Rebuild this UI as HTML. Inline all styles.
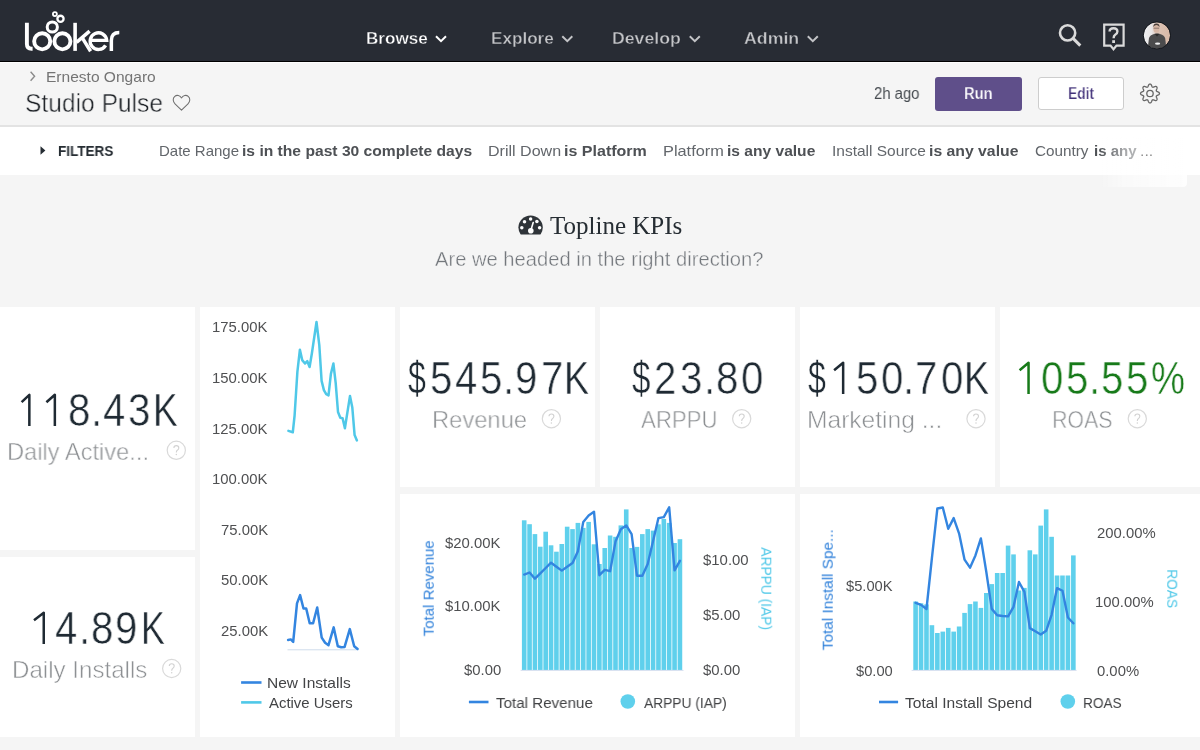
<!DOCTYPE html>
<html><head><meta charset="utf-8"><title>Studio Pulse</title>
<style>
html,body{margin:0;padding:0;}
body{width:1200px;height:750px;overflow:hidden;position:relative;background:#f5f5f5;font-family:"Liberation Sans",sans-serif;}
.b{position:absolute;}
.t{position:absolute;line-height:1;white-space:nowrap;transform-origin:0 0;will-change:transform;}
</style></head><body>
<div class="b" style="left:0;top:0;width:1200px;height:61px;background:#282c34"></div>
<div class="b" style="left:0;top:61px;width:1200px;height:1px;background:#000"></div>
<div class="b" style="left:0;top:62px;width:1200px;height:1px;background:#fdfdfd"></div>
<div class="b" style="left:0;top:63px;width:1200px;height:62px;background:#f5f5f5"></div>
<div class="b" style="left:0;top:125px;width:1200px;height:2px;background:#e3e3e3"></div>
<div class="b" style="left:0;top:127px;width:1200px;height:48px;background:#ffffff"></div>
<!-- buttons -->
<div class="b" style="left:935px;top:77px;width:87px;height:34px;background:#5f4f8a;border-radius:3px"></div>
<div class="b" style="left:1038px;top:77px;width:83.5px;height:31px;background:#fff;border:1.5px solid #cdcdcd;border-radius:3px"></div>
<!-- tiles -->
<div class="b" style="left:0;top:307px;width:194.5px;height:243px;background:#fff"></div>
<div class="b" style="left:0;top:557px;width:194.5px;height:180px;background:#fff"></div>
<div class="b" style="left:200px;top:307px;width:194.5px;height:430px;background:#fff"></div>
<div class="b" style="left:400px;top:307px;width:194.5px;height:180px;background:#fff"></div>
<div class="b" style="left:600px;top:307px;width:194.5px;height:180px;background:#fff"></div>
<div class="b" style="left:800px;top:307px;width:194.5px;height:180px;background:#fff"></div>
<div class="b" style="left:1000px;top:307px;width:200px;height:180px;background:#fff"></div>
<div class="b" style="left:400px;top:494px;width:394.5px;height:243px;background:#fff"></div>
<div class="b" style="left:800px;top:494px;width:400px;height:243px;background:#fff"></div>
<div class="t" style="left:365.69px;top:30.00px;font-size:17px;color:#ffffff;font-weight:bold;transform:scaleX(1.0058);-webkit-text-stroke:0.35px #282c34;">Browse</div>
<div class="t" style="left:490.69px;top:30.00px;font-size:17px;color:#c3c4c7;font-weight:bold;transform:scaleX(1.0066);-webkit-text-stroke:0.35px #282c34;">Explore</div>
<div class="t" style="left:612.46px;top:30.00px;font-size:17px;color:#c3c4c7;font-weight:bold;transform:scaleX(1.0394);-webkit-text-stroke:0.35px #282c34;">Develop</div>
<div class="t" style="left:744.20px;top:30.00px;font-size:17px;color:#c3c4c7;font-weight:bold;transform:scaleX(1.0438);-webkit-text-stroke:0.35px #282c34;">Admin</div>
<div class="t" style="left:45.66px;top:69.00px;font-size:15px;color:#747474;transform:scaleX(1.0359);">Ernesto Ongaro</div>
<div class="t" style="left:24.65px;top:90.00px;font-size:26px;color:#1a1e23;transform:scaleX(0.9455);-webkit-text-stroke:0.45px #f5f5f5;">Studio Pulse</div>
<div class="t" style="left:874.20px;top:86.00px;font-size:16px;color:#464b50;transform:scaleX(0.9278);">2h ago</div>
<div class="t" style="left:964.08px;top:86.00px;font-size:16px;color:#ffffff;font-weight:bold;transform:scaleX(0.9206);-webkit-text-stroke:0.25px #5f4f8a;">Run</div>
<div class="t" style="left:1067.89px;top:86.00px;font-size:16px;color:#42327a;font-weight:bold;transform:scaleX(0.8581);-webkit-text-stroke:0.25px #fff;">Edit</div>
<div class="t" style="left:58.30px;top:144.00px;font-size:14px;color:#262d33;font-weight:bold;transform:scaleX(0.9657);">FILTERS</div>
<div class="t" style="left:158.60px;top:143.00px;font-size:15px;color:#62666b;transform:scaleX(0.9960);">Date Range</div>
<div class="t" style="left:241.96px;top:143.00px;font-size:15px;color:#4e5155;font-weight:bold;transform:scaleX(1.0420);">is in the past 30 complete days</div>
<div class="t" style="left:488.23px;top:143.00px;font-size:15px;color:#62666b;transform:scaleX(1.0701);">Drill Down</div>
<div class="t" style="left:564.33px;top:143.00px;font-size:15px;color:#4e5155;font-weight:bold;transform:scaleX(1.0685);">is Platform</div>
<div class="t" style="left:663.21px;top:143.00px;font-size:15px;color:#62666b;transform:scaleX(1.0892);">Platform</div>
<div class="t" style="left:727.46px;top:143.00px;font-size:15px;color:#4e5155;font-weight:bold;transform:scaleX(1.0382);">is any value</div>
<div class="t" style="left:832.17px;top:143.00px;font-size:15px;color:#62666b;transform:scaleX(1.0320);">Install Source</div>
<div class="t" style="left:928.95px;top:143.00px;font-size:15px;color:#4e5155;font-weight:bold;transform:scaleX(1.0513);">is any value</div>
<div class="t" style="left:1035.00px;top:143.00px;font-size:15px;color:#62666b;transform:scaleX(1.0184);">Country</div>
<div class="t" style="left:1093.71px;top:143.00px;font-size:15px;color:#4e5155;font-weight:bold;transform:scaleX(0.9909);">is any</div>
<div class="t" style="left:1140.25px;top:143.00px;font-size:15px;color:#8f8f8f;transform:scaleX(1.0547);z-index:3;">...</div>
<div class="t" style="left:549.70px;top:213.00px;font-size:25px;color:#262d33;font-family:'Liberation Serif',serif;">Topline KPIs</div>
<div class="t" style="left:435.00px;top:249.00px;font-size:20px;color:#74787d;transform:scaleX(1.0082);-webkit-text-stroke:0.35px #f5f5f5;">Are we headed in the right direction?</div>
<div class="t" style="left:7.11px;top:440.00px;font-size:24px;color:#8e9194;transform:scaleX(0.9853);-webkit-text-stroke:0.5px #fff;">Daily Active...</div>
<div class="t" style="left:11.70px;top:658.00px;font-size:24px;color:#8e9194;transform:scaleX(1.0044);-webkit-text-stroke:0.5px #fff;">Daily Installs</div>
<div class="t" style="left:431.51px;top:408.00px;font-size:24px;color:#8e9194;transform:scaleX(0.9892);-webkit-text-stroke:0.5px #fff;">Revenue</div>
<div class="t" style="left:640.80px;top:408.00px;font-size:24px;color:#8e9194;transform:scaleX(0.9268);-webkit-text-stroke:0.5px #fff;">ARPPU</div>
<div class="t" style="left:806.98px;top:408.00px;font-size:24px;color:#8e9194;transform:scaleX(1.0241);-webkit-text-stroke:0.5px #fff;">Marketing ...</div>
<div class="t" style="left:1052.41px;top:408.00px;font-size:24px;color:#8e9194;transform:scaleX(0.8893);-webkit-text-stroke:0.5px #fff;">ROAS</div>
<div class="t" style="left:212.34px;top:320.00px;font-size:14px;color:#4f5052;transform:scaleX(1.0614);">175.00K</div>
<div class="t" style="left:212.34px;top:371.00px;font-size:14px;color:#4f5052;transform:scaleX(1.0614);">150.00K</div>
<div class="t" style="left:212.34px;top:422.00px;font-size:14px;color:#4f5052;transform:scaleX(1.0614);">125.00K</div>
<div class="t" style="left:212.34px;top:472.00px;font-size:14px;color:#4f5052;transform:scaleX(1.0614);">100.00K</div>
<div class="t" style="left:220.60px;top:523.00px;font-size:14px;color:#4f5052;transform:scaleX(1.0614);">75.00K</div>
<div class="t" style="left:220.60px;top:573.00px;font-size:14px;color:#4f5052;transform:scaleX(1.0614);">50.00K</div>
<div class="t" style="left:220.60px;top:624.00px;font-size:14px;color:#4f5052;transform:scaleX(1.0614);">25.00K</div>
<div class="t" style="left:267.43px;top:676.00px;font-size:14.5px;color:#434446;transform:scaleX(1.0700);">New Installs</div>
<div class="t" style="left:268.50px;top:696.00px;font-size:14.5px;color:#434446;transform:scaleX(1.0280);">Active Users</div>
<div class="t" style="left:445.20px;top:536.00px;font-size:14px;color:#4f5052;transform:scaleX(1.0621);">$20.00K</div>
<div class="t" style="left:445.20px;top:599.00px;font-size:14px;color:#4f5052;transform:scaleX(1.0621);">$10.00K</div>
<div class="t" style="left:463.86px;top:663.00px;font-size:14px;color:#4f5052;transform:scaleX(1.0621);">$0.00</div>
<div class="t" style="left:702.80px;top:553.00px;font-size:14px;color:#4f5052;transform:scaleX(1.0666);">$10.00</div>
<div class="t" style="left:702.80px;top:608.00px;font-size:14px;color:#4f5052;transform:scaleX(1.0666);">$5.00</div>
<div class="t" style="left:702.80px;top:663.00px;font-size:14px;color:#4f5052;transform:scaleX(1.0666);">$0.00</div>
<div class="t" style="left:495.50px;top:695.00px;font-size:15.5px;color:#434446;transform:scaleX(0.9779);">Total Revenue</div>
<div class="t" style="left:643.90px;top:695.00px;font-size:15.5px;color:#434446;transform:scaleX(0.8896);">ARPPU (IAP)</div>
<div class="t" style="left:845.50px;top:579.00px;font-size:14px;color:#4f5052;transform:scaleX(1.0503);">$5.00K</div>
<div class="t" style="left:855.78px;top:664.00px;font-size:14px;color:#4f5052;transform:scaleX(1.0503);">$0.00</div>
<div class="t" style="left:1096.50px;top:526.00px;font-size:14px;color:#4f5052;transform:scaleX(1.0598);">200.00%</div>
<div class="t" style="left:1095.44px;top:595.00px;font-size:14px;color:#4f5052;transform:scaleX(1.0598);">100.00%</div>
<div class="t" style="left:1096.50px;top:664.00px;font-size:14px;color:#4f5052;transform:scaleX(1.0598);">0.00%</div>
<div class="t" style="left:905.00px;top:695.00px;font-size:15.5px;color:#434446;transform:scaleX(1.0036);">Total Install Spend</div>
<div class="t" style="left:1083.32px;top:695.00px;font-size:15.5px;color:#434446;transform:scaleX(0.8805);">ROAS</div>
<div class="t" style="left:434.30px;top:623.92px;transform-origin:0px 12.28px;transform:rotate(-90deg) scaleX(1.0352);font-size:14.5px;color:#2f80da;">Total Revenue</div>
<div class="t" style="left:761.00px;top:534.82px;transform-origin:0px 12.28px;transform:rotate(90deg) scaleX(0.9514);font-size:14.5px;color:#4fc8e8;">ARPPU (IAP)</div>
<div class="t" style="left:833.30px;top:638.12px;transform-origin:0px 12.28px;transform:rotate(-90deg) scaleX(1.0580);font-size:14.5px;color:#2f80da;">Total Install Spe...</div>
<div class="t" style="left:1167.30px;top:556.78px;transform-origin:0px 12.28px;transform:rotate(90deg) scaleX(0.9437);font-size:14.5px;color:#4fc8e8;">ROAS</div>
<div class="t" style="left:67.75px;top:388.00px;font-size:45.6px;color:#1f2a33;transform:scaleX(0.8800);-webkit-text-stroke:0.5px #fff;">8</div>
<div class="t" style="left:91.08px;top:388.00px;font-size:45.6px;color:#1f2a33;transform:scaleX(0.8800);-webkit-text-stroke:0.5px #fff;">.</div>
<div class="t" style="left:103.06px;top:388.00px;font-size:45.6px;color:#1f2a33;transform:scaleX(0.8800);-webkit-text-stroke:0.5px #fff;">4</div>
<div class="t" style="left:127.95px;top:388.00px;font-size:45.6px;color:#1f2a33;transform:scaleX(0.8800);-webkit-text-stroke:0.5px #fff;">3</div>
<div class="t" style="left:152.76px;top:388.00px;font-size:45.6px;color:#1f2a33;transform:scaleX(0.8148);-webkit-text-stroke:0.5px #fff;">K</div>
<div class="t" style="left:55.11px;top:606.00px;font-size:45.6px;color:#1f2a33;transform:scaleX(0.8800);-webkit-text-stroke:0.5px #fff;">4</div>
<div class="t" style="left:78.53px;top:606.00px;font-size:45.6px;color:#1f2a33;transform:scaleX(0.8800);-webkit-text-stroke:0.5px #fff;">.</div>
<div class="t" style="left:90.88px;top:606.00px;font-size:45.6px;color:#1f2a33;transform:scaleX(0.8800);-webkit-text-stroke:0.5px #fff;">8</div>
<div class="t" style="left:115.14px;top:606.00px;font-size:45.6px;color:#1f2a33;transform:scaleX(0.8800);-webkit-text-stroke:0.5px #fff;">9</div>
<div class="t" style="left:140.73px;top:606.00px;font-size:45.6px;color:#1f2a33;transform:scaleX(0.7889);-webkit-text-stroke:0.5px #fff;">K</div>
<div class="t" style="left:407.60px;top:356.00px;font-size:45.6px;color:#1f2a33;transform:scaleX(0.7040);-webkit-text-stroke:0.5px #fff;">$</div>
<div class="t" style="left:429.80px;top:356.00px;font-size:45.6px;color:#1f2a33;transform:scaleX(0.8800);-webkit-text-stroke:0.5px #fff;">5</div>
<div class="t" style="left:454.56px;top:356.00px;font-size:45.6px;color:#1f2a33;transform:scaleX(0.8800);-webkit-text-stroke:0.5px #fff;">4</div>
<div class="t" style="left:480.20px;top:356.00px;font-size:45.6px;color:#1f2a33;transform:scaleX(0.8800);-webkit-text-stroke:0.5px #fff;">5</div>
<div class="t" style="left:503.48px;top:356.00px;font-size:45.6px;color:#1f2a33;transform:scaleX(0.8800);-webkit-text-stroke:0.5px #fff;">.</div>
<div class="t" style="left:515.36px;top:356.00px;font-size:45.6px;color:#1f2a33;transform:scaleX(0.8800);-webkit-text-stroke:0.5px #fff;">9</div>
<div class="t" style="left:540.56px;top:356.00px;font-size:45.6px;color:#1f2a33;transform:scaleX(0.8800);-webkit-text-stroke:0.5px #fff;">7</div>
<div class="t" style="left:564.31px;top:356.00px;font-size:45.6px;color:#1f2a33;transform:scaleX(0.8296);-webkit-text-stroke:0.5px #fff;">K</div>
<div class="t" style="left:632.25px;top:356.00px;font-size:45.6px;color:#1f2a33;transform:scaleX(0.7260);-webkit-text-stroke:0.5px #fff;">$</div>
<div class="t" style="left:654.33px;top:356.00px;font-size:45.6px;color:#1f2a33;transform:scaleX(0.8800);-webkit-text-stroke:0.5px #fff;">2</div>
<div class="t" style="left:679.55px;top:356.00px;font-size:45.6px;color:#1f2a33;transform:scaleX(0.8800);-webkit-text-stroke:0.5px #fff;">3</div>
<div class="t" style="left:703.58px;top:356.00px;font-size:45.6px;color:#1f2a33;transform:scaleX(0.8800);-webkit-text-stroke:0.5px #fff;">.</div>
<div class="t" style="left:716.10px;top:356.00px;font-size:45.6px;color:#1f2a33;transform:scaleX(0.8800);-webkit-text-stroke:0.5px #fff;">8</div>
<div class="t" style="left:740.85px;top:356.00px;font-size:45.6px;color:#1f2a33;transform:scaleX(0.8800);-webkit-text-stroke:0.5px #fff;">0</div>
<div class="t" style="left:807.60px;top:356.00px;font-size:45.6px;color:#1f2a33;transform:scaleX(0.7040);-webkit-text-stroke:0.5px #fff;">$</div>
<div class="t" style="left:856.20px;top:356.00px;font-size:45.6px;color:#1f2a33;transform:scaleX(0.8800);-webkit-text-stroke:0.5px #fff;">5</div>
<div class="t" style="left:881.00px;top:356.00px;font-size:45.6px;color:#1f2a33;transform:scaleX(0.8800);-webkit-text-stroke:0.5px #fff;">0</div>
<div class="t" style="left:903.48px;top:356.00px;font-size:45.6px;color:#1f2a33;transform:scaleX(0.8800);-webkit-text-stroke:0.5px #fff;">.</div>
<div class="t" style="left:914.96px;top:356.00px;font-size:45.6px;color:#1f2a33;transform:scaleX(0.8800);-webkit-text-stroke:0.5px #fff;">7</div>
<div class="t" style="left:941.00px;top:356.00px;font-size:45.6px;color:#1f2a33;transform:scaleX(0.8800);-webkit-text-stroke:0.5px #fff;">0</div>
<div class="t" style="left:964.31px;top:356.00px;font-size:45.6px;color:#1f2a33;transform:scaleX(0.8296);-webkit-text-stroke:0.5px #fff;">K</div>
<div class="t" style="left:1040.65px;top:356.00px;font-size:45.6px;color:#177a19;transform:scaleX(0.8800);-webkit-text-stroke:0.5px #fff;">0</div>
<div class="t" style="left:1065.55px;top:356.00px;font-size:45.6px;color:#177a19;transform:scaleX(0.8800);-webkit-text-stroke:0.5px #fff;">5</div>
<div class="t" style="left:1088.98px;top:356.00px;font-size:45.6px;color:#177a19;transform:scaleX(0.8800);-webkit-text-stroke:0.5px #fff;">.</div>
<div class="t" style="left:1100.80px;top:356.00px;font-size:45.6px;color:#177a19;transform:scaleX(0.8800);-webkit-text-stroke:0.5px #fff;">5</div>
<div class="t" style="left:1126.00px;top:356.00px;font-size:45.6px;color:#177a19;transform:scaleX(0.8800);-webkit-text-stroke:0.5px #fff;">5</div>
<div class="t" style="left:1150.66px;top:356.00px;font-size:45.6px;color:#177a19;transform:scaleX(0.8395);-webkit-text-stroke:0.5px #fff;">%</div>
<div class="b" style="z-index:2;left:1098px;top:137px;width:89px;height:50px;border-radius:0 0 4px 0;background:linear-gradient(to right,rgba(255,255,255,0),rgba(255,255,255,0.5) 30%,rgba(255,255,255,0.85) 100%)"></div>
<svg class="b" style="left:0;top:0" width="1200" height="750" viewBox="0 0 1200 750">
<g fill="none" stroke="#ffffff" stroke-linecap="butt">
<path d="M26.9,22.7 V44 Q26.9,48.7 31.6,48.7 H32.6" stroke-width="3.9"/>
<circle cx="42.2" cy="41.3" r="8.05" stroke-width="3.9"/>
<circle cx="62.4" cy="41.3" r="8.05" stroke-width="3.9"/>
<path d="M75.1,22.8 V50.9" stroke-width="3.6"/>
<path d="M76.5,42.4 L89.6,31.2 M82.6,38.4 L90.6,51.2" stroke-width="3.5"/>
<path d="M90.1,40.4 H106.7 A8.3,8.3 0 1 0 105.6,45.3" stroke-width="3.4"/>
<path d="M111.35,51 V40.5 Q111.35,32.4 119.3,32.4" stroke-width="3.5"/>
<circle cx="52.3" cy="27" r="5.1" stroke-width="3.0"/>
<circle cx="60.5" cy="18.85" r="3.1" stroke-width="2.3"/>
<circle cx="54.9" cy="14.1" r="2.0" stroke-width="1.8"/>
</g>
<path d="M436,36.3 L441,41.2 L446,36.3" fill="none" stroke="#ffffff" stroke-width="2"/>
<path d="M562.3,36.3 L567.3,41.2 L572.3,36.3" fill="none" stroke="#c3c4c7" stroke-width="2"/>
<path d="M689.8,36.3 L694.8,41.2 L699.8,36.3" fill="none" stroke="#c3c4c7" stroke-width="2"/>
<path d="M807.8,36.3 L812.8,41.2 L817.8,36.3" fill="none" stroke="#c3c4c7" stroke-width="2"/>
<circle cx="1067.6" cy="32.9" r="7.6" fill="none" stroke="#dadada" stroke-width="2.6"/>
<path d="M1073.3,38.6 L1080.3,45.6" stroke="#dadada" stroke-width="3" stroke-linecap="butt"/>
<path d="M1110.5,45.6 H1104.2 V24.6 H1123.6 V45.6 H1116.5 L1113.5,49.2 Z" fill="none" stroke="#dadada" stroke-width="2.2" stroke-linejoin="miter"/>
<path d="M1109.6,31.6 Q1109.6,28.2 1113.5,28.2 Q1117.4,28.2 1117.4,31.6 Q1117.4,33.6 1115.2,34.8 Q1113.6,35.8 1113.6,38.2" fill="none" stroke="#dadada" stroke-width="2.4"/>
<rect x="1112.2" y="40.2" width="2.8" height="2.8" fill="#dadada"/>
<defs><clipPath id="av"><circle cx="1156.9" cy="35.4" r="13.2"/></clipPath><linearGradient id="avg" x1="0" x2="1" y1="0" y2="0"><stop offset="0" stop-color="#eef0f2"/><stop offset="0.3" stop-color="#e9e6e6"/><stop offset="0.5" stop-color="#dcc4b6"/><stop offset="1" stop-color="#d8b8a6"/></linearGradient></defs>
<g clip-path="url(#av)">
<rect x="1143" y="21" width="28" height="29" fill="url(#avg)"/>
<path d="M1147.5,50 L1149,38 Q1150,35 1154,34 L1157,33.6 L1160,34 Q1164.5,35 1165.2,38.5 L1166.5,50 Z" fill="#4b4b4c"/>
<path d="M1154.6,33.8 L1157,36.5 L1159.4,33.8 Z" fill="#2a2a2a"/>
<ellipse cx="1156.4" cy="28.6" rx="3.1" ry="4.2" fill="#d6b6a4"/>
<path d="M1153.2,27 Q1153.4,23.6 1156.4,23.6 Q1159.4,23.6 1159.6,27 Q1158,25 1156.4,25 Q1154.8,25 1153.2,27 Z" fill="#4a3f3a"/>
<path d="M1153.6,28.2 H1159.2" stroke="#6a5a55" stroke-width="0.7"/>
<ellipse cx="1157.6" cy="43.6" rx="2.6" ry="1.2" fill="#f0f0f0"/>
</g>
<circle cx="1156.9" cy="35.4" r="13.6" fill="none" stroke="#15181d" stroke-width="1"/>
<path d="M30.6,71.8 L34.6,76.3 L30.6,80.8" fill="none" stroke="#8a8a8a" stroke-width="1.4"/>
<path d="M181.5,97.9 C180,95.3 176.8,94.6 174.8,96.3 C172.4,98.3 172.9,101.8 175,103.8 L181.5,110.2 L188,103.8 C190.1,101.8 190.6,98.3 188.2,96.3 C186.2,94.6 183,95.3 181.5,97.9 Z" fill="none" stroke="#707070" stroke-width="1.05" stroke-linejoin="round"/>
<path d="M1150.00,84.05 L1150.25,84.07 L1150.49,84.15 L1150.73,84.28 L1150.95,84.46 L1151.16,84.70 L1151.35,85.00 L1151.51,85.33 L1151.66,85.68 L1151.80,86.02 L1151.92,86.33 L1152.05,86.59 L1152.18,86.80 L1152.32,86.96 L1152.46,87.09 L1152.62,87.17 L1152.79,87.22 L1152.99,87.24 L1153.20,87.22 L1153.44,87.16 L1153.71,87.07 L1154.02,86.94 L1154.35,86.80 L1154.71,86.65 L1155.06,86.54 L1155.40,86.46 L1155.72,86.44 L1156.01,86.46 L1156.27,86.54 L1156.49,86.66 L1156.68,86.82 L1156.84,87.01 L1156.96,87.23 L1157.04,87.49 L1157.06,87.78 L1157.04,88.10 L1156.96,88.44 L1156.85,88.79 L1156.70,89.15 L1156.56,89.48 L1156.43,89.79 L1156.34,90.06 L1156.28,90.30 L1156.26,90.51 L1156.28,90.71 L1156.33,90.88 L1156.41,91.04 L1156.54,91.18 L1156.70,91.32 L1156.91,91.45 L1157.17,91.58 L1157.48,91.70 L1157.82,91.84 L1158.17,91.99 L1158.50,92.15 L1158.80,92.34 L1159.04,92.55 L1159.22,92.77 L1159.35,93.01 L1159.43,93.25 L1159.45,93.50 L1159.43,93.75 L1159.35,93.99 L1159.22,94.23 L1159.04,94.45 L1158.80,94.66 L1158.50,94.85 L1158.17,95.01 L1157.82,95.16 L1157.48,95.30 L1157.17,95.42 L1156.91,95.55 L1156.70,95.68 L1156.54,95.82 L1156.41,95.96 L1156.33,96.12 L1156.28,96.29 L1156.26,96.49 L1156.28,96.70 L1156.34,96.94 L1156.43,97.21 L1156.56,97.52 L1156.70,97.85 L1156.85,98.21 L1156.96,98.56 L1157.04,98.90 L1157.06,99.22 L1157.04,99.51 L1156.96,99.77 L1156.84,99.99 L1156.68,100.18 L1156.49,100.34 L1156.27,100.46 L1156.01,100.54 L1155.72,100.56 L1155.40,100.54 L1155.06,100.46 L1154.71,100.35 L1154.35,100.20 L1154.02,100.06 L1153.71,99.93 L1153.44,99.84 L1153.20,99.78 L1152.99,99.76 L1152.79,99.78 L1152.62,99.83 L1152.46,99.91 L1152.32,100.04 L1152.18,100.20 L1152.05,100.41 L1151.92,100.67 L1151.80,100.98 L1151.66,101.32 L1151.51,101.67 L1151.35,102.00 L1151.16,102.30 L1150.95,102.54 L1150.73,102.72 L1150.49,102.85 L1150.25,102.93 L1150.00,102.95 L1149.75,102.93 L1149.51,102.85 L1149.27,102.72 L1149.05,102.54 L1148.84,102.30 L1148.65,102.00 L1148.49,101.67 L1148.34,101.32 L1148.20,100.98 L1148.08,100.67 L1147.95,100.41 L1147.82,100.20 L1147.68,100.04 L1147.54,99.91 L1147.38,99.83 L1147.21,99.78 L1147.01,99.76 L1146.80,99.78 L1146.56,99.84 L1146.29,99.93 L1145.98,100.06 L1145.65,100.20 L1145.29,100.35 L1144.94,100.46 L1144.60,100.54 L1144.28,100.56 L1143.99,100.54 L1143.73,100.46 L1143.51,100.34 L1143.32,100.18 L1143.16,99.99 L1143.04,99.77 L1142.96,99.51 L1142.94,99.22 L1142.96,98.90 L1143.04,98.56 L1143.15,98.21 L1143.30,97.85 L1143.44,97.52 L1143.57,97.21 L1143.66,96.94 L1143.72,96.70 L1143.74,96.49 L1143.72,96.29 L1143.67,96.12 L1143.59,95.96 L1143.46,95.82 L1143.30,95.68 L1143.09,95.55 L1142.83,95.42 L1142.52,95.30 L1142.18,95.16 L1141.83,95.01 L1141.50,94.85 L1141.20,94.66 L1140.96,94.45 L1140.78,94.23 L1140.65,93.99 L1140.57,93.75 L1140.55,93.50 L1140.57,93.25 L1140.65,93.01 L1140.78,92.77 L1140.96,92.55 L1141.20,92.34 L1141.50,92.15 L1141.83,91.99 L1142.18,91.84 L1142.52,91.70 L1142.83,91.58 L1143.09,91.45 L1143.30,91.32 L1143.46,91.18 L1143.59,91.04 L1143.67,90.88 L1143.72,90.71 L1143.74,90.51 L1143.72,90.30 L1143.66,90.06 L1143.57,89.79 L1143.44,89.48 L1143.30,89.15 L1143.15,88.79 L1143.04,88.44 L1142.96,88.10 L1142.94,87.78 L1142.96,87.49 L1143.04,87.23 L1143.16,87.01 L1143.32,86.82 L1143.51,86.66 L1143.73,86.54 L1143.99,86.46 L1144.28,86.44 L1144.60,86.46 L1144.94,86.54 L1145.29,86.65 L1145.65,86.80 L1145.98,86.94 L1146.29,87.07 L1146.56,87.16 L1146.80,87.22 L1147.01,87.24 L1147.21,87.22 L1147.38,87.17 L1147.54,87.09 L1147.68,86.96 L1147.82,86.80 L1147.95,86.59 L1148.08,86.33 L1148.20,86.02 L1148.34,85.68 L1148.49,85.33 L1148.65,85.00 L1148.84,84.70 L1149.05,84.46 L1149.27,84.28 L1149.51,84.15 L1149.75,84.07 Z" fill="none" stroke="#676767" stroke-width="1.3" stroke-linejoin="round"/>
<circle cx="1150" cy="93.5" r="3.2" fill="none" stroke="#676767" stroke-width="1.3"/>
<path d="M40.5,146.3 L45.4,150.5 L40.5,154.7 Z" fill="#262d33"/>
<defs><clipPath id="gc"><rect x="510" y="210" width="40" height="24.6"/></clipPath></defs>
<circle cx="530.6" cy="227.6" r="12.2" fill="#2f3439" clip-path="url(#gc)"/>
<circle cx="521.8" cy="227.8" r="1.75" fill="#fff"/>
<circle cx="524.5" cy="221.8" r="1.75" fill="#fff"/>
<circle cx="530.6" cy="219" r="1.75" fill="#fff"/>
<circle cx="536.9" cy="221.6" r="1.75" fill="#fff"/>
<circle cx="539.6" cy="227.8" r="1.75" fill="#fff"/>
<path d="M530.8,230.5 L533.2,222.6" stroke="#fff" stroke-width="1.6" stroke-linecap="round"/>
<circle cx="530.8" cy="230.8" r="2.8" fill="#fff"/>
<circle cx="176.3" cy="450.3" r="9.1" fill="none" stroke="#d9d9d9" stroke-width="1.2"/>
<path d="M173.9,447.90000000000003 Q173.9,445.6 176.3,445.6 Q178.8,445.6 178.8,447.90000000000003 Q178.8,449.40000000000003 177.3,450.3 Q176.3,451.0 176.3,452.5" fill="none" stroke="#d2d2d2" stroke-width="1.1"/>
<circle cx="176.3" cy="454.5" r="0.75" fill="#d2d2d2"/>
<circle cx="171.7" cy="668.5" r="9.1" fill="none" stroke="#d9d9d9" stroke-width="1.2"/>
<path d="M169.29999999999998,666.1 Q169.29999999999998,663.8 171.7,663.8 Q174.2,663.8 174.2,666.1 Q174.2,667.6 172.7,668.5 Q171.7,669.2 171.7,670.7" fill="none" stroke="#d2d2d2" stroke-width="1.1"/>
<circle cx="171.7" cy="672.7" r="0.75" fill="#d2d2d2"/>
<circle cx="551.4" cy="418.7" r="9.1" fill="none" stroke="#d9d9d9" stroke-width="1.2"/>
<path d="M549.0,416.3 Q549.0,414.0 551.4,414.0 Q553.9,414.0 553.9,416.3 Q553.9,417.8 552.4,418.7 Q551.4,419.4 551.4,420.9" fill="none" stroke="#d2d2d2" stroke-width="1.1"/>
<circle cx="551.4" cy="422.9" r="0.75" fill="#d2d2d2"/>
<circle cx="741.7" cy="418.7" r="9.1" fill="none" stroke="#d9d9d9" stroke-width="1.2"/>
<path d="M739.3000000000001,416.3 Q739.3000000000001,414.0 741.7,414.0 Q744.2,414.0 744.2,416.3 Q744.2,417.8 742.7,418.7 Q741.7,419.4 741.7,420.9" fill="none" stroke="#d2d2d2" stroke-width="1.1"/>
<circle cx="741.7" cy="422.9" r="0.75" fill="#d2d2d2"/>
<circle cx="976" cy="418.7" r="9.1" fill="none" stroke="#d9d9d9" stroke-width="1.2"/>
<path d="M973.6,416.3 Q973.6,414.0 976,414.0 Q978.5,414.0 978.5,416.3 Q978.5,417.8 977,418.7 Q976,419.4 976,420.9" fill="none" stroke="#d2d2d2" stroke-width="1.1"/>
<circle cx="976" cy="422.9" r="0.75" fill="#d2d2d2"/>
<circle cx="1137.3" cy="418.7" r="9.1" fill="none" stroke="#d9d9d9" stroke-width="1.2"/>
<path d="M1134.8999999999999,416.3 Q1134.8999999999999,414.0 1137.3,414.0 Q1139.8,414.0 1139.8,416.3 Q1139.8,417.8 1138.3,418.7 Q1137.3,419.4 1137.3,420.9" fill="none" stroke="#d2d2d2" stroke-width="1.1"/>
<circle cx="1137.3" cy="422.9" r="0.75" fill="#d2d2d2"/>
<path d="M287.5,649.8 H357.8" stroke="#cfdcec" stroke-width="1"/>
<polyline points="288.4,430.9 292.8,432.3 294.6,415.5 297.4,371.6 299.9,349.7 302.2,360.1 305,363.5 307.3,361.2 309.6,367 311.9,353.2 316.5,322 319.3,345.1 321.6,380.9 323.9,390.1 326.2,394.2 328.5,395.4 330.9,373.9 333.4,363.5 335.7,383.2 338,412 340.3,417.8 342.6,418.2 344.9,428.2 350,395.9 352.3,407.4 354.6,435.1 356.9,440.4" fill="none" stroke="#4fc8e8" stroke-width="2.5" stroke-linejoin="round" stroke-linecap="round"/>
<polyline points="288.1,640 290.8,639.4 293.2,641.8 297,603.4 300.1,595.1 303.5,608.5 306.2,608.5 309.7,623.2 313.1,623.2 317.2,607.5 321.7,637.6 325.1,642.8 328.5,645.2 333.7,627.4 337.8,646.2 341.2,647.2 344.6,646.9 349.8,629.1 354.2,646.2 357.6,649" fill="none" stroke="#3385e0" stroke-width="2.5" stroke-linejoin="round" stroke-linecap="round"/>
<path d="M241.1,682.5 H261.5" stroke="#3385e0" stroke-width="2.6"/>
<path d="M241.1,702.4 H261.5" stroke="#4fc8e8" stroke-width="2.6"/>
<rect x="521.90" y="520.3" width="4.6" height="149.7" fill="#5fd0ec"/>
<rect x="527.27" y="524.2" width="4.6" height="145.8" fill="#5fd0ec"/>
<rect x="532.64" y="534.1" width="4.6" height="135.9" fill="#5fd0ec"/>
<rect x="538.01" y="546.7" width="4.6" height="123.3" fill="#5fd0ec"/>
<rect x="543.38" y="531.7" width="4.6" height="138.3" fill="#5fd0ec"/>
<rect x="548.75" y="545.3" width="4.6" height="124.7" fill="#5fd0ec"/>
<rect x="554.12" y="551.7" width="4.6" height="118.3" fill="#5fd0ec"/>
<rect x="559.49" y="544" width="4.6" height="126.0" fill="#5fd0ec"/>
<rect x="564.86" y="526.7" width="4.6" height="143.3" fill="#5fd0ec"/>
<rect x="570.23" y="529.1" width="4.6" height="140.9" fill="#5fd0ec"/>
<rect x="575.60" y="522.9" width="4.6" height="147.1" fill="#5fd0ec"/>
<rect x="580.97" y="527.9" width="4.6" height="142.1" fill="#5fd0ec"/>
<rect x="586.34" y="521.9" width="4.6" height="148.1" fill="#5fd0ec"/>
<rect x="591.71" y="544.3" width="4.6" height="125.7" fill="#5fd0ec"/>
<rect x="597.08" y="564" width="4.6" height="106.0" fill="#5fd0ec"/>
<rect x="602.45" y="548" width="4.6" height="122.0" fill="#5fd0ec"/>
<rect x="607.82" y="535.5" width="4.6" height="134.5" fill="#5fd0ec"/>
<rect x="613.19" y="536.8" width="4.6" height="133.2" fill="#5fd0ec"/>
<rect x="618.56" y="525.4" width="4.6" height="144.6" fill="#5fd0ec"/>
<rect x="623.93" y="509.4" width="4.6" height="160.6" fill="#5fd0ec"/>
<rect x="629.30" y="548" width="4.6" height="122.0" fill="#5fd0ec"/>
<rect x="634.67" y="546.9" width="4.6" height="123.1" fill="#5fd0ec"/>
<rect x="640.04" y="534.1" width="4.6" height="135.9" fill="#5fd0ec"/>
<rect x="645.41" y="529.1" width="4.6" height="140.9" fill="#5fd0ec"/>
<rect x="650.78" y="530.6" width="4.6" height="139.4" fill="#5fd0ec"/>
<rect x="656.15" y="524.3" width="4.6" height="145.7" fill="#5fd0ec"/>
<rect x="661.52" y="519" width="4.6" height="151.0" fill="#5fd0ec"/>
<rect x="666.89" y="522.9" width="4.6" height="147.1" fill="#5fd0ec"/>
<rect x="672.26" y="543" width="4.6" height="127.0" fill="#5fd0ec"/>
<rect x="677.63" y="539.2" width="4.6" height="130.8" fill="#5fd0ec"/>
<path d="M520.6,670.4 H683.5" stroke="#d5dff0" stroke-width="1"/>
<polyline points="524.1999999999999,574.6 529.5699999999999,572.5 534.9399999999999,578.7 540.31,573.4 545.68,568 551.05,562.7 556.42,566.7 561.79,570.6 567.16,566.7 572.53,562.9 577.9,551.2 583.27,521.9 588.6399999999999,515.5 594.01,511.7 599.3799999999999,575.2 604.7499999999999,569.8 610.1199999999999,571.2 615.4899999999999,541.6 620.8599999999999,529.3 626.2299999999999,525.4 631.5999999999999,534.1 636.9699999999999,575.7 642.3399999999999,575.7 647.7099999999999,564 653.0799999999999,541 658.4499999999999,518.1 663.8199999999999,517.1 669.1899999999999,507.3 674.56,570.4 679.93,560.8" fill="none" stroke="#3385e0" stroke-width="2.4" stroke-linejoin="round" stroke-linecap="round"/>
<path d="M468.9,702 H488.5" stroke="#3385e0" stroke-width="2.6"/>
<circle cx="627.8" cy="701.5" r="7.3" fill="#5fd0ec"/>
<rect x="913.30" y="601.5" width="4.6" height="68.5" fill="#5fd0ec"/>
<rect x="918.74" y="603.3" width="4.6" height="66.7" fill="#5fd0ec"/>
<rect x="924.18" y="604.4" width="4.6" height="65.6" fill="#5fd0ec"/>
<rect x="929.62" y="625.2" width="4.6" height="44.8" fill="#5fd0ec"/>
<rect x="935.06" y="633" width="4.6" height="37.0" fill="#5fd0ec"/>
<rect x="940.50" y="631.6" width="4.6" height="38.4" fill="#5fd0ec"/>
<rect x="945.94" y="627.9" width="4.6" height="42.1" fill="#5fd0ec"/>
<rect x="951.38" y="631.6" width="4.6" height="38.4" fill="#5fd0ec"/>
<rect x="956.82" y="626.5" width="4.6" height="43.5" fill="#5fd0ec"/>
<rect x="962.26" y="612.9" width="4.6" height="57.1" fill="#5fd0ec"/>
<rect x="967.70" y="604.1" width="4.6" height="65.9" fill="#5fd0ec"/>
<rect x="973.14" y="601.5" width="4.6" height="68.5" fill="#5fd0ec"/>
<rect x="978.58" y="607.9" width="4.6" height="62.1" fill="#5fd0ec"/>
<rect x="984.02" y="593" width="4.6" height="77.0" fill="#5fd0ec"/>
<rect x="989.46" y="584.1" width="4.6" height="85.9" fill="#5fd0ec"/>
<rect x="994.90" y="573" width="4.6" height="97.0" fill="#5fd0ec"/>
<rect x="1000.34" y="573" width="4.6" height="97.0" fill="#5fd0ec"/>
<rect x="1005.78" y="545.6" width="4.6" height="124.4" fill="#5fd0ec"/>
<rect x="1011.22" y="554.4" width="4.6" height="115.6" fill="#5fd0ec"/>
<rect x="1016.66" y="590.5" width="4.6" height="79.5" fill="#5fd0ec"/>
<rect x="1022.10" y="587.9" width="4.6" height="82.1" fill="#5fd0ec"/>
<rect x="1027.54" y="550.3" width="4.6" height="119.7" fill="#5fd0ec"/>
<rect x="1032.98" y="554.4" width="4.6" height="115.6" fill="#5fd0ec"/>
<rect x="1038.42" y="525.6" width="4.6" height="144.4" fill="#5fd0ec"/>
<rect x="1043.86" y="509.4" width="4.6" height="160.6" fill="#5fd0ec"/>
<rect x="1049.30" y="536.8" width="4.6" height="133.2" fill="#5fd0ec"/>
<rect x="1054.74" y="575.5" width="4.6" height="94.5" fill="#5fd0ec"/>
<rect x="1060.18" y="575.5" width="4.6" height="94.5" fill="#5fd0ec"/>
<rect x="1065.62" y="575.5" width="4.6" height="94.5" fill="#5fd0ec"/>
<rect x="1071.06" y="555.4" width="4.6" height="114.6" fill="#5fd0ec"/>
<path d="M911.6,670.4 H1076.6" stroke="#d5dff0" stroke-width="1"/>
<polyline points="915.5999999999999,602.8 921.04,604.9 926.4799999999999,609 931.92,558 937.3599999999999,508.5 942.8,507.5 948.2399999999999,528.8 953.68,518.1 959.1199999999999,533.6 964.56,559.7 969.9999999999999,567.7 975.4399999999999,555.4 980.8799999999999,538.4 986.3199999999999,572 991.7599999999999,608.9 997.1999999999999,615.3 1002.6399999999999,616 1008.0799999999999,616.4 1013.5199999999999,606.8 1018.9599999999999,582 1024.3999999999999,591.9 1029.84,628.1 1035.28,631.3 1040.7199999999998,634.5 1046.1599999999999,630.8 1051.6,614.8 1057.04,588.1 1062.48,590.8 1067.9199999999998,617.5 1073.36,623.3" fill="none" stroke="#3385e0" stroke-width="2.4" stroke-linejoin="round" stroke-linecap="round"/>
<path d="M879,702 H898.1" stroke="#3385e0" stroke-width="2.6"/>
<circle cx="1067.8" cy="701.5" r="7.3" fill="#5fd0ec"/>
<path d="M21.60,402.20 L29.35,394.80 V426.00" fill="none" stroke="#1f2a33" stroke-width="2.5" stroke-linejoin="round" stroke-linecap="butt"/>
<path d="M46.40,402.20 L54.85,394.80 V426.00" fill="none" stroke="#1f2a33" stroke-width="2.5" stroke-linejoin="round" stroke-linecap="butt"/>
<path d="M34.00,620.20 L43.75,612.80 V644.00" fill="none" stroke="#1f2a33" stroke-width="2.5" stroke-linejoin="round" stroke-linecap="butt"/>
<path d="M834.10,370.20 L843.15,362.80 V394.00" fill="none" stroke="#1f2a33" stroke-width="2.5" stroke-linejoin="round" stroke-linecap="butt"/>
<path d="M1019.60,370.20 L1028.55,362.80 V394.00" fill="none" stroke="#177a19" stroke-width="2.5" stroke-linejoin="round" stroke-linecap="butt"/>
</svg>
</body></html>
